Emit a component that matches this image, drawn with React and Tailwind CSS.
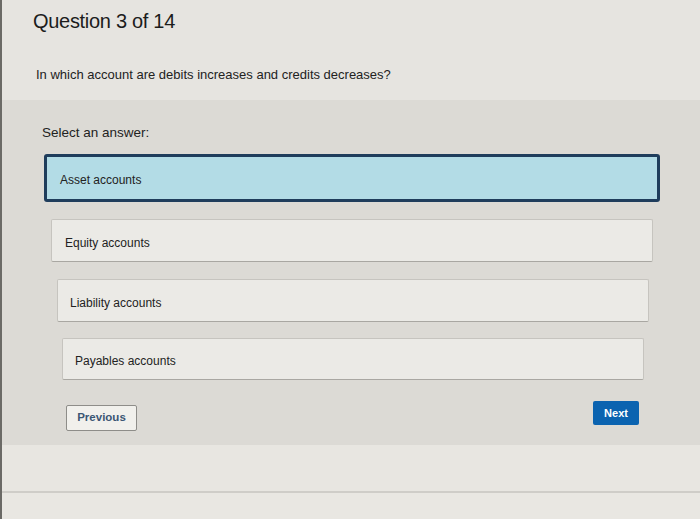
export default function App() {
  const options = [
    { label: 'Equity accounts', box: 'ml-[49px] w-[602px] h-[43px] mt-[17px] pl-[13px]' },
    { label: 'Liability accounts', box: 'ml-[55px] w-[592px] h-[43px] mt-[17px] pl-[12px]' },
    { label: 'Payables accounts', box: 'ml-[60px] w-[582px] h-[42px] mt-[16px] pl-[12px]' }
  ]

  return (
    <div className="w-[700px] h-[519px] overflow-hidden bg-[#e9e7e2] border-l-2 border-[#6b6a66] font-['Liberation_Sans',Arial,sans-serif] text-[#1f1f1f]">
      <div className="h-[100px] bg-[#e6e4e0] pl-[31px] pt-[8px]">
        <h1 className="text-[20px] leading-[26px] tracking-[-0.3px] text-[#1c1c1c]">Question 3 of 14</h1>
        <p className="mt-[33px] pl-[3px] text-[13px] leading-[16px] text-[#222]">
          In which account are debits increases and credits decreases?
        </p>
      </div>

      <div className="h-[345px] bg-[#dcdad5] pt-[23px]">
        <div className="pl-[40px] text-[13.5px] leading-[20px] text-[#222]">Select an answer:</div>

        <div className="ml-[42px] w-[616px] h-[48px] mt-[11px] pt-[4px] bg-[#b3dce6] border-[3px] border-[#1f3d5c] rounded-[3px] flex items-center pl-[13px] text-[12px] text-[#222]">
          Asset accounts
        </div>

        {options.map((o) => (
          <div
            key={o.label}
            className={`${o.box} pt-[4px] bg-[#ebeae6] border border-[#c6c4bf] border-b-[#a9a7a2] rounded-[2px] flex items-center text-[12px] text-[#222]`}
          >
            {o.label}
          </div>
        ))}

        <div className="flex justify-between items-start pr-[61px]">
          <button className="ml-[64px] mt-[25px] w-[71px] h-[26px] bg-[#f1f0ec] border border-[#8e8d89] rounded-[2px] text-[11.5px] font-bold text-[#3b5674]">
            Previous
          </button>
          <button className="mt-[21px] w-[46px] h-[24px] bg-[#0b63b0] rounded-[2px] text-[11px] font-bold text-white">
            Next
          </button>
        </div>
      </div>

      <div className="h-[48px] bg-[#e8e6e1] border-b-2 border-[#cfcdc8]"></div>
    </div>
  )
}
